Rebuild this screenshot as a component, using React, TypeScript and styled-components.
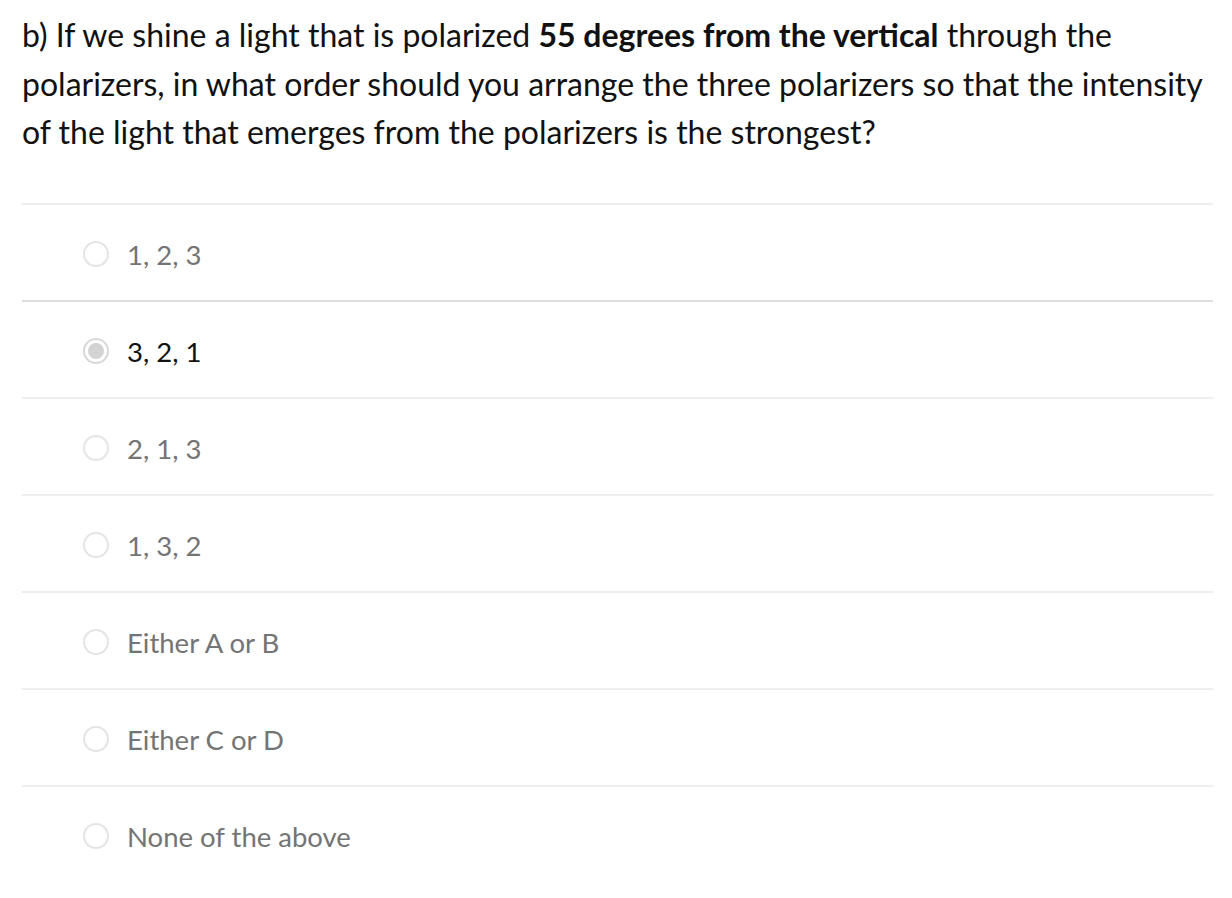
import React from "react";
import styled, { createGlobalStyle } from "styled-components";

const Global = createGlobalStyle`
  html, body { margin: 0; padding: 0; background: #fff; }
  body { font-family: Lato, "Open Sans", sans-serif; }
`;

const Page = styled.div`
  padding: 11px 19px 0 22px;
`;

const Question = styled.div`
  font-size: 32px;
  line-height: 48.5px;
  color: #111;
  margin: 0 -15px 46px 0;
  strong { font-weight: 700; }
`;

const Answers = styled.div`
  display: flex;
  flex-direction: column;
`;

const Row = styled.label<{ $selected?: boolean }>`
  display: flex;
  align-items: center;
  height: 95px;
  border-top: 2px solid ${(p) => (p.$selected ? "#dedede" : "#eeeeee")};
  padding-left: 61px;
  gap: 18px;
`;

const Radio = styled.span<{ $selected?: boolean }>`
  width: 22px;
  height: 22px;
  border-radius: 50%;
  border: 2px solid ${(p) => (p.$selected ? "#d8d8d8" : "#e4e4e4")};
  background: #fff;
  display: flex;
  align-items: center;
  justify-content: center;
  flex: none;
  margin-top: 4px;
  &::after {
    content: "";
    display: ${(p) => (p.$selected ? "block" : "none")};
    width: 16px;
    height: 16px;
    border-radius: 50%;
    background: #d3d3d3;
  }
`;

const AnswerText = styled.span<{ $selected?: boolean }>`
  font-size: 27.5px;
  color: ${(p) => (p.$selected ? "#111" : "#747474")};
  line-height: 1;
  margin-top: 6px;
`;

const answers = [
  "1, 2, 3",
  "3, 2, 1",
  "2, 1, 3",
  "1, 3, 2",
  "Either A or B",
  "Either C or D",
  "None of the above",
];

export default function App() {
  return (
    <Page>
      <Global />
      <Question>
        b) If we shine a light that is polarized <strong>55 degrees from the vertical</strong> through the
        polarizers, in what order should you arrange the three polarizers so that the intensity
        of the light that emerges from the polarizers is the strongest?
      </Question>
      <Answers>
        {answers.map((a, i) => {
          const sel = i === 1;
          return (
            <Row key={a} $selected={sel}>
              <Radio $selected={sel} />
              <AnswerText $selected={sel}>{a}</AnswerText>
            </Row>
          );
        })}
      </Answers>
    </Page>
  );
}
